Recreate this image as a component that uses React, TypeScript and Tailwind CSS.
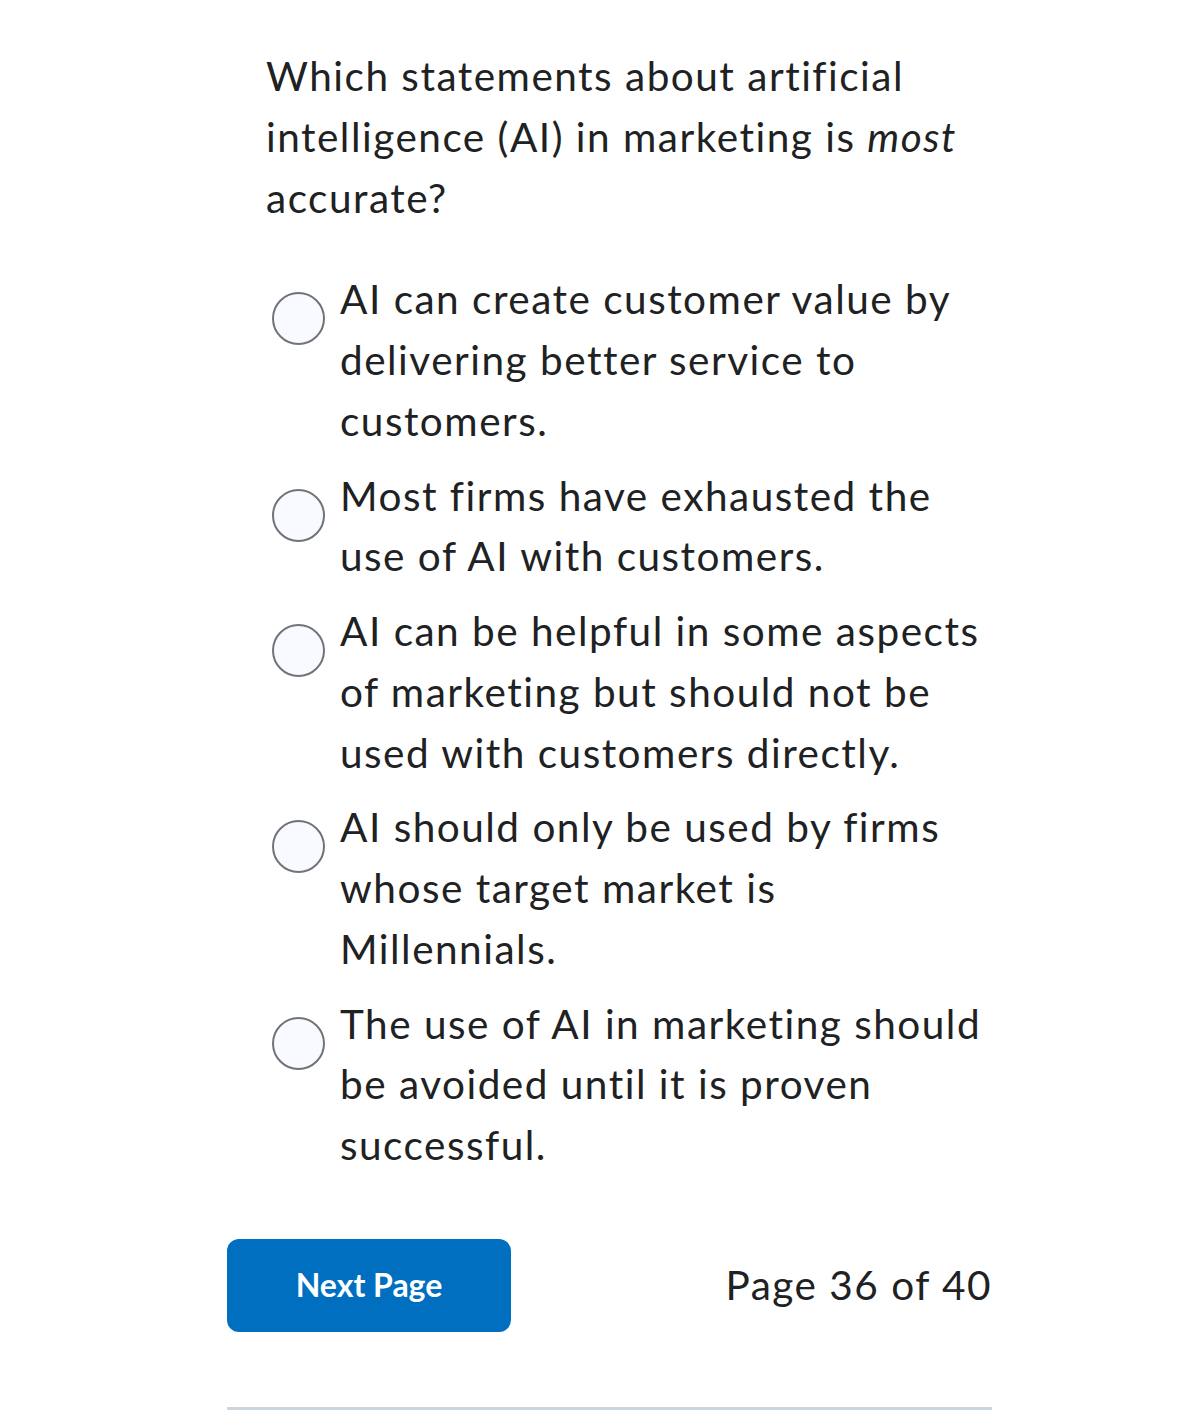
const options = [
  'AI can create customer value by delivering better service to customers.',
  'Most firms have exhausted the use of AI with customers.',
  'AI can be helpful in some aspects of marketing but should not be used with customers directly.',
  'AI should only be used by firms whose target market is Millennials.',
  'The use of AI in marketing should be avoided until it is proven successful.',
];

function Radio() {
  return (
    <span className="mt-[23px] block h-[53px] w-[53px] shrink-0 rounded-full border-2 border-[#6f7477] bg-[#f9faff]" />
  );
}

export default function App() {
  return (
    <div
      className="min-h-[1420px] bg-white text-[#202122] [font-variant-ligatures:none]"
      style={{ fontFamily: 'Lato, "Noto Sans", sans-serif' }}
    >
      <div className="ml-[227px] w-[765px] pt-[46px]">
        <p className="pl-[39px] pr-[20px] text-[40.5px] leading-[60.75px] tracking-[1.5px]">
          Which statements about artificial intelligence (AI) in marketing is <em>most</em> accurate?
        </p>

        <div className="mt-[41px] flex flex-col gap-[14px] pl-[45px]">
          {options.map((o) => (
            <label key={o} className="flex items-start gap-[15px]">
              <Radio />
              <span className="text-[40.5px] leading-[60.75px] tracking-[1.5px]">{o}</span>
            </label>
          ))}
        </div>

        <div className="mt-[63px] flex items-center justify-between">
          <button className="h-[93px] w-[284px] rounded-[12px] bg-[#006fbf] text-[32px] font-bold text-white">
            Next Page
          </button>
          <span className="text-[40.5px] leading-[60px] tracking-[1.5px]">Page 36 of 40</span>
        </div>

        <div className="mt-[75px] h-[3px] bg-[#cdd5dc]" />
      </div>
    </div>
  );
}
